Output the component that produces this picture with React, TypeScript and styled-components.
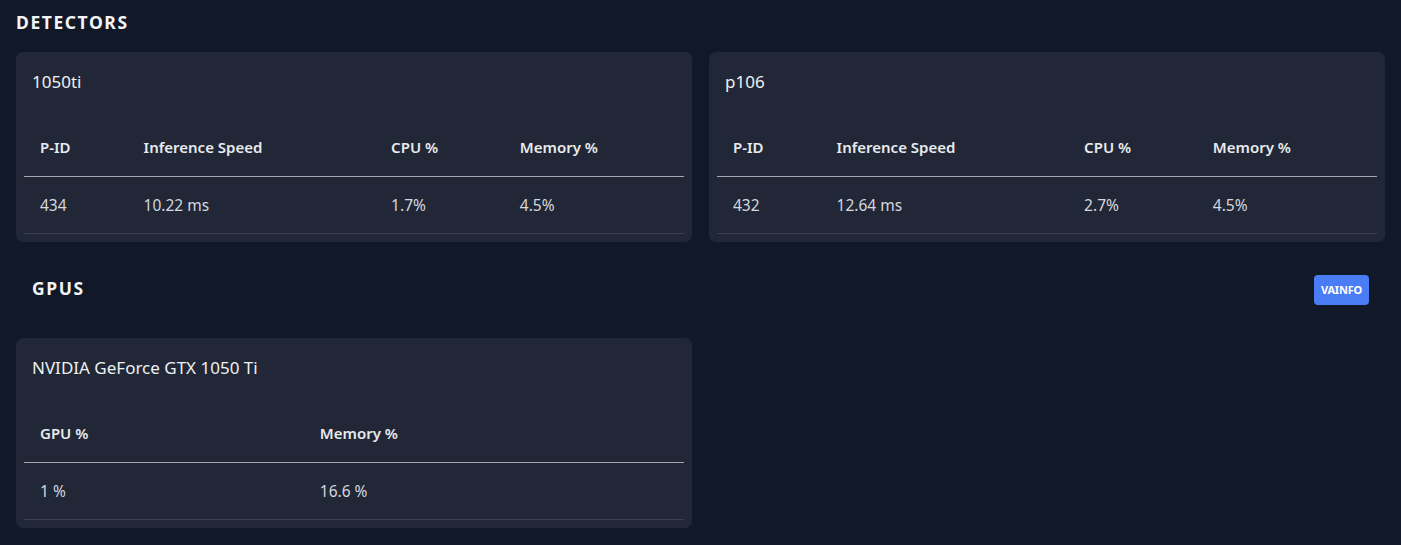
import React from "react";
import styled, { createGlobalStyle } from "styled-components";

const Global = createGlobalStyle`
  html, body { margin: 0; padding: 0; background: #111827; }
  body { font-family: "Noto Sans", "Open Sans", sans-serif; color: #e5e7eb; }
  * { box-sizing: border-box; }
`;

const Page = styled.div`
  padding: 8px 16px 16px;
  min-height: 545px;
  background: #111827;
`;

const SectionTitle = styled.h2<{ $indent?: boolean }>`
  margin: 0;
  padding-left: ${(p) => (p.$indent ? "16px" : "0")};
  padding-bottom: ${(p) => (p.$indent ? "4px" : "0")};
  font-size: 17.5px;
  line-height: 28px;
  font-weight: 700;
  letter-spacing: 0.09em;
  color: #f3f4f6;
  text-transform: uppercase;
`;

const SectionHeader = styled.div`
  display: flex;
  align-items: center;
  justify-content: space-between;
  height: 32px;
  margin-top: 32px;
  padding-right: 16px;
`;

const Button = styled.button`
  height: 30px;
  margin-top: -1px;
  padding: 0 7px;
  border: none;
  border-radius: 4px;
  background: #4a7cf6;
  color: #ffffff;
  font-family: inherit;
  font-size: 11px;
  font-weight: 700;
  letter-spacing: -0.2px;
  cursor: pointer;
`;

const Grid = styled.div<{ $top: number }>`
  display: grid;
  grid-template-columns: 1fr 1fr;
  gap: 17px;
  margin-top: ${(p) => p.$top}px;
`;

const Card = styled.div`
  background: #212736;
  border-radius: 7px;
  padding: 16px 8px 8px;
`;

const CardTitle = styled.div`
  padding: 0 8px;
  margin-bottom: 24px;
  font-size: 17px;
  line-height: 28px;
  color: #eef0f3;
`;

const Table = styled.table`
  width: 100%;
  border-collapse: collapse;
`;

const Th = styled.th`
  text-align: left;
  padding: 15px 16px 17px;
  font-size: 15px;
  line-height: 24px;
  font-weight: 600;
  color: #e8eaee;
  border-bottom: 1px solid #a3a8b4;
`;

const Td = styled.td`
  padding: 16px;
  font-size: 15.5px;
  line-height: 24px;
  color: #d5d8de;
  border-bottom: 1px solid #3a4050;
`;

type Col = { label: string; width: string };

function DataCard({ title, cols, rows }: { title: string; cols: Col[]; rows: string[][] }) {
  return (
    <Card>
      <CardTitle>{title}</CardTitle>
      <Table>
        <colgroup>
          {cols.map((c) => (
            <col key={c.label} style={{ width: c.width }} />
          ))}
        </colgroup>
        <thead>
          <tr>
            {cols.map((c) => (
              <Th key={c.label}>{c.label}</Th>
            ))}
          </tr>
        </thead>
        <tbody>
          {rows.map((r, i) => (
            <tr key={i}>
              {r.map((v, j) => (
                <Td key={j}>{v}</Td>
              ))}
            </tr>
          ))}
        </tbody>
      </Table>
    </Card>
  );
}

const detCols: Col[] = [
  { label: "P-ID", width: "15.7%" },
  { label: "Inference Speed", width: "37.5%" },
  { label: "CPU %", width: "19.5%" },
  { label: "Memory %", width: "27.3%" },
];

const gpuCols: Col[] = [
  { label: "GPU %", width: "42.4%" },
  { label: "Memory %", width: "57.6%" },
];

export default function App() {
  return (
    <>
      <Global />
      <Page>
        <SectionTitle>Detectors</SectionTitle>
        <Grid $top={16}>
          <DataCard title="1050ti" cols={detCols} rows={[["434", "10.22 ms", "1.7%", "4.5%"]]} />
          <DataCard title="p106" cols={detCols} rows={[["432", "12.64 ms", "2.7%", "4.5%"]]} />
        </Grid>
        <SectionHeader>
          <SectionTitle $indent>GPUs</SectionTitle>
          <Button>VAINFO</Button>
        </SectionHeader>
        <Grid $top={32}>
          <DataCard title="NVIDIA GeForce GTX 1050 Ti" cols={gpuCols} rows={[["1 %", "16.6 %"]]} />
        </Grid>
      </Page>
    </>
  );
}
